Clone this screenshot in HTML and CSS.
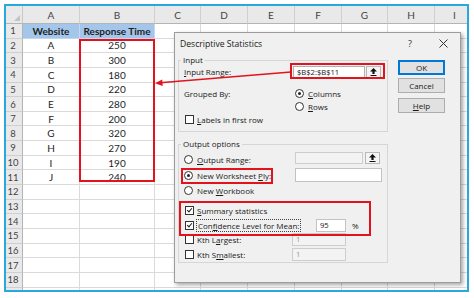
FILE: index.html
```html
<!DOCTYPE html>
<html>
<head>
<meta charset="utf-8">
<link rel="stylesheet" href="styles.css">
</head>
<body>
<div class="frame">
  <div class="sheet">
    <div class="corner"><span class="tri"></span></div><div class="ch">A</div><div class="ch">B</div><div class="ch">C</div><div class="ch">D</div><div class="ch">E</div><div class="ch">F</div><div class="ch">G</div><div class="ch">H</div><div class="ch">I</div>
    <div class="rh">1</div><div class="c hl b">Website</div><div class="c hl b">Response Time</div><div class="c"></div><div class="c"></div><div class="c"></div><div class="c"></div><div class="c"></div><div class="c"></div><div class="c"></div>
    <div class="rh">2</div><div class="c">A</div><div class="c">250</div><div class="c"></div><div class="c"></div><div class="c"></div><div class="c"></div><div class="c"></div><div class="c"></div><div class="c"></div>
    <div class="rh">3</div><div class="c">B</div><div class="c">300</div><div class="c"></div><div class="c"></div><div class="c"></div><div class="c"></div><div class="c"></div><div class="c"></div><div class="c"></div>
    <div class="rh">4</div><div class="c">C</div><div class="c">180</div><div class="c"></div><div class="c"></div><div class="c"></div><div class="c"></div><div class="c"></div><div class="c"></div><div class="c"></div>
    <div class="rh">5</div><div class="c">D</div><div class="c">220</div><div class="c"></div><div class="c"></div><div class="c"></div><div class="c"></div><div class="c"></div><div class="c"></div><div class="c"></div>
    <div class="rh">6</div><div class="c">E</div><div class="c">280</div><div class="c"></div><div class="c"></div><div class="c"></div><div class="c"></div><div class="c"></div><div class="c"></div><div class="c"></div>
    <div class="rh">7</div><div class="c">F</div><div class="c">200</div><div class="c"></div><div class="c"></div><div class="c"></div><div class="c"></div><div class="c"></div><div class="c"></div><div class="c"></div>
    <div class="rh">8</div><div class="c">G</div><div class="c">320</div><div class="c"></div><div class="c"></div><div class="c"></div><div class="c"></div><div class="c"></div><div class="c"></div><div class="c"></div>
    <div class="rh">9</div><div class="c">H</div><div class="c">270</div><div class="c"></div><div class="c"></div><div class="c"></div><div class="c"></div><div class="c"></div><div class="c"></div><div class="c"></div>
    <div class="rh">10</div><div class="c">I</div><div class="c">190</div><div class="c"></div><div class="c"></div><div class="c"></div><div class="c"></div><div class="c"></div><div class="c"></div><div class="c"></div>
    <div class="rh">11</div><div class="c">J</div><div class="c">240</div><div class="c"></div><div class="c"></div><div class="c"></div><div class="c"></div><div class="c"></div><div class="c"></div><div class="c"></div>
    <div class="rh">12</div><div class="c"></div><div class="c"></div><div class="c"></div><div class="c"></div><div class="c"></div><div class="c"></div><div class="c"></div><div class="c"></div><div class="c"></div>
    <div class="rh">13</div><div class="c"></div><div class="c"></div><div class="c"></div><div class="c"></div><div class="c"></div><div class="c"></div><div class="c"></div><div class="c"></div><div class="c"></div>
    <div class="rh">14</div><div class="c"></div><div class="c"></div><div class="c"></div><div class="c"></div><div class="c"></div><div class="c"></div><div class="c"></div><div class="c"></div><div class="c"></div>
    <div class="rh">15</div><div class="c"></div><div class="c"></div><div class="c"></div><div class="c"></div><div class="c"></div><div class="c"></div><div class="c"></div><div class="c"></div><div class="c"></div>
    <div class="rh">16</div><div class="c"></div><div class="c"></div><div class="c"></div><div class="c"></div><div class="c"></div><div class="c"></div><div class="c"></div><div class="c"></div><div class="c"></div>
    <div class="rh">17</div><div class="c"></div><div class="c"></div><div class="c"></div><div class="c"></div><div class="c"></div><div class="c"></div><div class="c"></div><div class="c"></div><div class="c"></div>
    <div class="rh">18</div><div class="c"></div><div class="c"></div><div class="c"></div><div class="c"></div><div class="c"></div><div class="c"></div><div class="c"></div><div class="c"></div><div class="c"></div>
    <div class="rh"></div><div class="c"></div><div class="c"></div><div class="c"></div><div class="c"></div><div class="c"></div><div class="c"></div><div class="c"></div><div class="c"></div><div class="c"></div>
  </div>
</div>

<div class="dialog">
  <div class="titlebar">
    <span class="title">Descriptive Statistics</span>
    <span class="qmark">?</span>
    <span class="close"><svg width="9" height="9" viewBox="0 0 9 9"><path d="M0.5 0.5L8.5 8.5M8.5 0.5L0.5 8.5" stroke="#333" stroke-width="1" fill="none"/></svg></span>
  </div>
  <div class="dbody">
    <div class="groups">
      <fieldset class="group g-in">
        <legend>Input</legend>
        <div class="gcontent">
          <div class="row r-range">
            <span class="lbl"><u>I</u>nput Range:</span>
            <span class="tb tb-range">$B$2:$B$11</span>
            <span class="pick"><svg width="7" height="8" viewBox="0 0 7 8"><path d="M3.5 0L7 3.6H4.6V6H2.4V3.6H0Z" fill="#111"/><rect x="0.5" y="7" width="6" height="1" fill="#111"/></svg></span>
          </div>
          <div class="row r-grp">
            <span class="lbl">Grouped By:</span>
            <span class="opt opt-r"><span class="radio on"></span><span class="t"><u>C</u>olumns</span></span>
          </div>
          <div class="row r-rows">
            <span class="lbl"></span>
            <span class="opt opt-r"><span class="radio"></span><span class="t"><u>R</u>ows</span></span>
          </div>
          <div class="row r-lab">
            <span class="opt opt-c"><span class="check"></span><span class="t"><u>L</u>abels in first row</span></span>
          </div>
        </div>
      </fieldset>
      <fieldset class="group g-out">
        <legend>Output options</legend>
        <div class="gcontent">
          <div class="row o1">
            <span class="opt w-out"><span class="radio"></span><span class="t"><u>O</u>utput Range:</span></span>
            <span class="tb tb-out dis"></span>
            <span class="pick"><svg width="7" height="8" viewBox="0 0 7 8"><path d="M3.5 0L7 3.6H4.6V6H2.4V3.6H0Z" fill="#111"/><rect x="0.5" y="7" width="6" height="1" fill="#111"/></svg></span>
          </div>
          <div class="row o2">
            <span class="opt w-out"><span class="radio on"></span><span class="t">New Worksheet <u>P</u>ly:</span></span>
            <span class="tb tb-ply"></span>
          </div>
          <div class="row o3">
            <span class="opt"><span class="radio"></span><span class="t">New <u>W</u>orkbook</span></span>
          </div>
          <div class="row o4">
            <span class="opt opt-c"><span class="check on"></span><span class="t"><u>S</u>ummary statistics</span></span>
          </div>
          <div class="row o5">
            <span class="opt opt-c w-conf"><span class="check on"></span><span class="t focus">Con<u>f</u>idence Level for Mean:</span></span>
            <span class="tb tb-95">95</span>
            <span class="pct">%</span>
          </div>
          <div class="row o6">
            <span class="opt opt-c w-kth"><span class="check"></span><span class="t">Kth L<u>a</u>rgest:</span></span>
            <span class="tb tb-kth dis">1</span>
          </div>
          <div class="row o7">
            <span class="opt opt-c w-kth"><span class="check"></span><span class="t">Kth S<u>m</u>allest:</span></span>
            <span class="tb tb-kth dis">1</span>
          </div>
        </div>
      </fieldset>
    </div>
    <div class="buttons">
      <div class="btn btn-ok">OK</div>
      <div class="btn btn-cancel">Cancel</div>
      <div class="btn btn-help"><u>H</u>elp</div>
    </div>
  </div>
</div>

<div class="redbox rb-data"></div>
<div class="redbox rb-range"></div>
<div class="redbox rb-ply"></div>
<div class="redbox rb-stats"></div>
<svg class="arrow" width="474" height="298" viewBox="0 0 474 298">
  <line x1="291" y1="72" x2="160" y2="82.8" stroke="#e2131d" stroke-width="1.6"/>
  <polygon points="155,83.2 162.2,79.6 162.7,86" fill="#e2131d"/>
</svg>
</body>
</html>
```

FILE: styles.css
```css
html, body {
  margin: 0;
  padding: 0;
  background: #ffffff;
}
body {
  width: 474px;
  height: 298px;
  position: relative;
  overflow: hidden;
  font-family: "Lato", "Liberation Sans", sans-serif;
}
.frame {
  margin: 4px;
  width: 465px;
  height: 288px;
  box-sizing: border-box;
  border: 2px solid #29a8e0;
  overflow: hidden;
  background: #fff;
}
.sheet {
  display: grid;
  grid-template-columns: 17px 57px 75px 46px 47px 47px 47px 46px 47px 40px;
  grid-template-rows: 18px repeat(19, 14.65px);
  font-size: 10px;
  color: #1e1e1e;
}
.sheet > div {
  box-sizing: border-box;
  display: flex;
  align-items: center;
  justify-content: center;
  overflow: hidden;
  white-space: nowrap;
}
.corner {
  background: #e9e9e9;
  border-right: 1px solid #c8c8c8;
  border-bottom: 1px solid #b4b4b4;
  position: relative;
}
.tri {
  position: absolute;
  right: 2px;
  bottom: 2px;
  width: 0;
  height: 0;
  border-left: 6px solid transparent;
  border-bottom: 6px solid #c4c4c4;
}
.ch {
  background: #e9e9e9;
  border-right: 1px solid #cfcfcf;
  border-bottom: 1px solid #b4b4b4;
  color: #444;
  font-size: 10px;
  padding-top: 1px;
}
.rh {
  background: #e9e9e9;
  border-right: 1px solid #b4b4b4;
  border-bottom: 1px solid #cfcfcf;
  color: #444;
  font-size: 9.5px;
  padding-right: 2px;
}
.c {
  border-right: 1px solid #dadada;
  border-bottom: 1px solid #dadada;
}
.hl {
  background: #a3c6ea;
  border-right-color: #c3d8ee;
  border-bottom-color: #c3d8ee;
}
.b {
  font-weight: 700;
}

/* dialog */
.dialog {
  position: absolute;
  left: 174px;
  top: 32px;
  width: 287px;
  height: 251px;
  box-sizing: border-box;
  background: #f0f0f0;
  border: 1px solid #9c9c9c;
  box-shadow: 2px 2px 4px rgba(0, 0, 0, 0.35);
  font-family: "Open Sans", "Liberation Sans", sans-serif;
  font-size: 8px;
  color: #1a1a1a;
}
.titlebar {
  height: 21px;
  display: flex;
  align-items: center;
  padding-left: 5px;
}
.title {
  flex: 1;
  font-size: 8.6px;
}
.qmark {
  width: 10px;
  text-align: center;
  margin-right: 23px;
  font-size: 9px;
  color: #333;
}
.close {
  width: 10px;
  display: flex;
  justify-content: center;
  margin-right: 12px;
}
.dbody {
  display: flex;
  padding-left: 3px;
}
.groups {
  width: 210px;
  margin-top: 2px;
}
.group {
  margin: 0;
  padding: 0 0 5px 0;
  border: 1px solid #d6d6d6;
  min-width: 0;
}
.group legend {
  padding: 0 2px;
  margin-left: 2px;
  line-height: 8px;
  font-size: 8px;
}
.g-out {
  margin-top: 8px;
  padding-bottom: 0;
}
.gcontent {
  padding-left: 5px;
}
.row {
  display: flex;
  align-items: center;
  white-space: nowrap;
}
.lbl {
  width: 109px;
  flex: none;
}
.r-range { height: 15px; }
.r-grp { height: 14px; margin-top: 7px; }
.r-rows { height: 13px; }
.r-lab { height: 13px; }
.opt {
  display: flex;
  align-items: center;
  flex: none;
}
.t {
  white-space: pre;
}
.opt-r { margin-left: 2px; }
.opt-c { margin-left: 1px; }
.radio {
  width: 9px;
  height: 9px;
  box-sizing: border-box;
  border: 1px solid #333;
  border-radius: 50%;
  background: #fff;
  margin-right: 4px;
  position: relative;
  flex: none;
}
.radio.on::after {
  content: "";
  position: absolute;
  left: 2px;
  top: 2px;
  width: 3px;
  height: 3px;
  border-radius: 50%;
  background: #222;
}
.check {
  width: 9px;
  height: 9px;
  box-sizing: border-box;
  border: 1px solid #333;
  background: #fff;
  margin-right: 3px;
  position: relative;
  flex: none;
}
.check.on::after {
  content: "";
  position: absolute;
  left: 2px;
  top: 0px;
  width: 2px;
  height: 4px;
  border-right: 1px solid #222;
  border-bottom: 1px solid #222;
  transform: rotate(40deg);
}
.tb {
  box-sizing: border-box;
  height: 12px;
  border: 1px solid #c3c3c3;
  background: #fff;
  font-size: 7.6px;
  line-height: 10px;
  padding-left: 3px;
  flex: none;
}
.tb.dis {
  background: #f3f3f3;
  border-color: #cdcdcd;
  color: #9a9a9a;
}
.tb-range { width: 72px; border-color: #b0b0b0; }
.pick {
  width: 15px;
  height: 12px;
  box-sizing: border-box;
  margin-left: 1px;
  border: 1px solid #b8b8b8;
  background: #f4f4f4;
  display: flex;
  align-items: center;
  justify-content: center;
  flex: none;
}
.w-out { width: 111px; }
.w-conf { width: 131px; }
.w-kth { width: 107px; }
.o1 { height: 14px; margin-top: 4px; align-items: flex-start; }
.o1 .opt { margin-top: 2px; }
.tb-out { width: 68px; }
.o1 .pick { margin-left: 2px; }
.o2 { height: 16px; margin-top: 1px; }
.tb-ply { width: 87px; height: 14px; }
.o3 { height: 15px; }
.o4 { height: 14.7px; margin-top: 5px; }
.o5 { height: 14.7px; }
.o6 { height: 14.7px; }
.o7 { height: 14.7px; }
.focus {
  outline: 1px dotted #444;
  outline-offset: 0px;
  padding: 0 1px;
}
.tb-95 { width: 30px; height: 13px; }
.pct { margin-left: 6px; }
.tb-kth { width: 54px; height: 13px; }

.buttons {
  margin-left: 10px;
  margin-top: 6px;
  width: 47px;
  display: flex;
  flex-direction: column;
}
.btn {
  height: 15px;
  box-sizing: border-box;
  border: 1px solid #adadad;
  background: #e1e1e1;
  text-align: center;
  line-height: 13px;
  font-size: 8px;
}
.btn-ok {
  border: 1px solid #0078d7;
  box-shadow: inset 0 0 0 1px #0078d7;
}
.btn-cancel { margin-top: 3px; }
.btn-help { margin-top: 5px; }

/* annotations */
.redbox {
  position: absolute;
  box-sizing: border-box;
  border: 2px solid #e2131d;
}
.rb-data { left: 79px; top: 39px; width: 76px; height: 143px; }
.rb-range { left: 290px; top: 63px; width: 95px; height: 16px; }
.rb-ply { left: 181px; top: 168px; width: 92px; height: 16px; }
.rb-stats { left: 179px; top: 201px; width: 192px; height: 35px; }
.arrow {
  position: absolute;
  left: 0;
  top: 0;
  pointer-events: none;
}
```
